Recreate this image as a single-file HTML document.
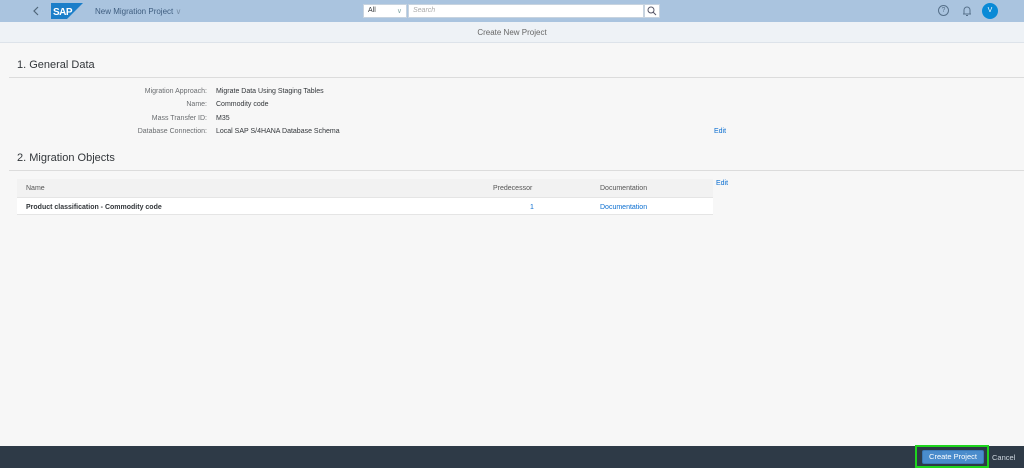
<!DOCTYPE html>
<html><head><style>
*{margin:0;padding:0;box-sizing:border-box}
body{width:1024px;height:468px;overflow:hidden;background:#f7f7f7;font-family:"Liberation Sans",sans-serif;position:relative;color:#32363a}
.a{position:absolute}
.hdr{left:0;top:0;width:1024px;height:22px;background:#aac4df}
.sub{left:0;top:22px;width:1024px;height:21px;background:#eef2f6;border-bottom:1px solid #dde3ea;font-size:8px;color:#666;text-align:center;line-height:22px}
.t{font-size:11px;color:#32363a}
.lbl{font-size:7px;color:#6a6d70;text-align:right;width:207px;left:0}
.val{font-size:7px;color:#32363a;left:216px}
.ln{height:1px;background:#dcdcdc}
.lnk{color:#0a6ed1;font-size:7px}
</style></head><body>
<div class="a hdr"></div>
<svg class="a" style="left:32px;top:6px" width="8" height="10"><path d="M6 1L2 5L6 9" stroke="#50667a" stroke-width="1.2" fill="none"/></svg>
<svg class="a" style="left:51px;top:3px" width="32" height="16"><polygon points="0,0 32,0 16,16 0,16" fill="#1a7ec9"/><text x="2" y="12" font-family="Liberation Sans" font-weight="bold" font-size="10" fill="#fff" letter-spacing="-0.5">SAP</text></svg>
<div class="a" style="left:95px;top:7px;font-size:8px;color:#3e5d7f">New Migration Project <span style="color:#7a90a8">&#x2228;</span></div>
<div class="a" style="left:363px;top:4px;width:44px;height:14px;background:#fff;border:1px solid #c7d3df;font-size:7px;padding:2px 4px">All <span style="float:right;color:#8aa">&#x2228;</span></div>
<div class="a" style="left:408px;top:4px;width:236px;height:14px;background:#fff;border:1px solid #c7d3df;font-size:7px;color:#aaa;font-style:italic;padding:2px 4px">Search</div>
<div class="a" style="left:644px;top:4px;width:16px;height:14px;background:#fff;border:1px solid #c7d3df"></div>
<svg class="a" style="left:647px;top:6px" width="10" height="10"><circle cx="4" cy="4" r="3" stroke="#556" fill="none"/><path d="M6 6L9 9" stroke="#556"/></svg>
<div class="a" style="left:938px;top:5px;width:11px;height:11px;border:1px solid #56708a;border-radius:50%;font-size:7px;text-align:center;line-height:9px;color:#56708a">?</div>
<svg class="a" style="left:962px;top:5px" width="10" height="12"><path d="M2 9V5a3 3 0 0 1 6 0v4h1H1zM4 10.5h2" stroke="#56708a" fill="none"/></svg>
<div class="a" style="left:982px;top:3px;width:16px;height:16px;border-radius:50%;background:#0a8ad6;color:#fff;font-size:7px;text-align:center;line-height:16px">V</div>
<div class="a sub">Create New Project</div>
<div class="a t" style="left:17px;top:59px">1. General Data</div>
<div class="a ln" style="left:9px;top:77px;width:1015px"></div>
<div class="a lbl" style="top:88px">Migration Approach:</div><div class="a val" style="top:88px">Migrate Data Using Staging Tables</div>
<div class="a lbl" style="top:101px">Name:</div><div class="a val" style="top:101px">Commodity code</div>
<div class="a lbl" style="top:115px">Mass Transfer ID:</div><div class="a val" style="top:115px">M35</div>
<div class="a lbl" style="top:128px">Database Connection:</div><div class="a val" style="top:128px">Local SAP S/4HANA Database Schema</div>
<div class="a lnk" style="left:714px;top:128px">Edit</div>
<div class="a t" style="left:17px;top:152px">2. Migration Objects</div>
<div class="a ln" style="left:9px;top:170px;width:1015px"></div>
<div class="a" style="left:17px;top:179px;width:696px;height:19px;background:#f2f2f2;border-bottom:1px solid #e5e5e5"></div>
<div class="a" style="left:17px;top:198px;width:696px;height:17px;background:#fff;border-bottom:1px solid #e5e5e5"></div>
<div class="a" style="left:26px;top:185px;font-size:7px;color:#555">Name</div>
<div class="a" style="left:493px;top:185px;font-size:7px;color:#555">Predecessor</div>
<div class="a" style="left:600px;top:185px;font-size:7px;color:#555">Documentation</div>
<div class="a lnk" style="left:716px;top:180px">Edit</div>
<div class="a" style="left:26px;top:204px;font-size:7px;font-weight:bold">Product classification - Commodity code</div>
<div class="a lnk" style="left:530px;top:204px">1</div>
<div class="a lnk" style="left:600px;top:204px">Documentation</div>
<div class="a" style="left:0;top:446px;width:1024px;height:22px;background:#2e3a47"></div>
<div class="a" style="left:915px;top:445px;width:74px;height:23px;border:2px solid #1ed51e"></div>
<div class="a" style="left:922px;top:450px;width:62px;height:14px;background:#4a8ccc;border:1px solid #3a78b5;border-radius:2px;color:#fff;font-size:7.5px;text-align:center;line-height:12px">Create Project</div>
<div class="a" style="left:992px;top:453px;font-size:7.5px;color:#d0d8e0">Cancel</div>
</body></html>
